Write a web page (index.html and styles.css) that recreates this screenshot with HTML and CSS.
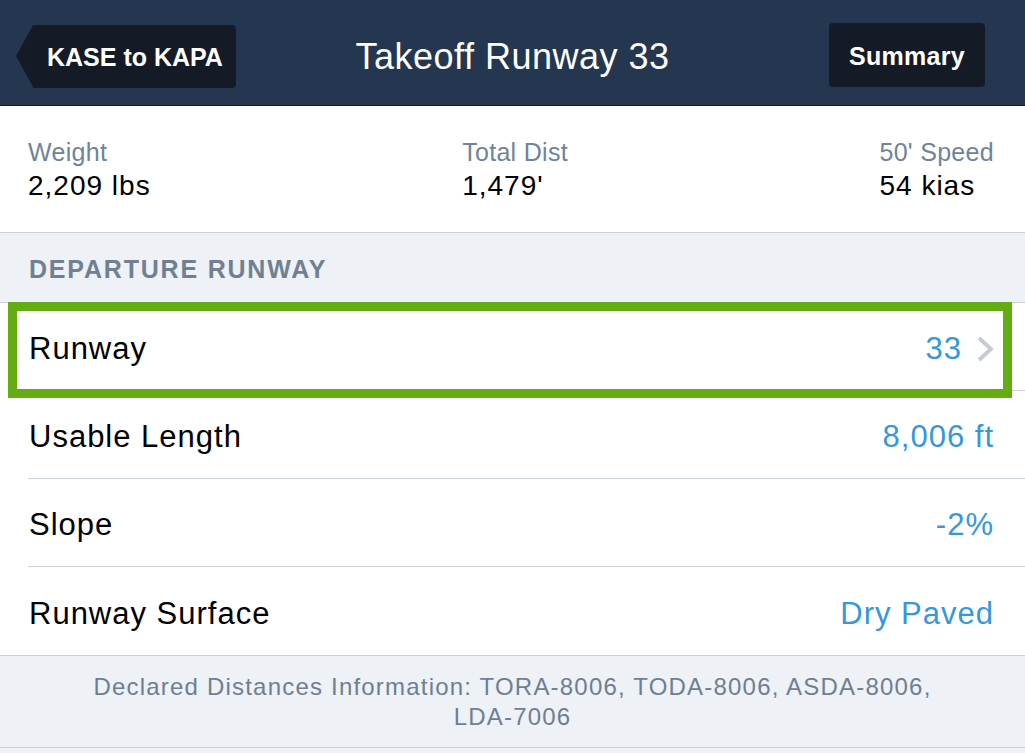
FILE: index.html
```html
<!DOCTYPE html>
<html lang="en">
<head>
<meta charset="utf-8">
<title>Takeoff Runway 33</title>
<link rel="stylesheet" href="styles.css">
</head>
<body>
  <header class="navbar">
    <div class="nav-left">
      <button class="back-btn"><span class="back-label">KASE to KAPA</span></button>
    </div>
    <h1 class="nav-title">Takeoff Runway 33</h1>
    <div class="nav-right">
      <button class="summary-btn">Summary</button>
    </div>
  </header>

  <section class="stats">
    <div class="stat">
      <div class="stat-label">Weight</div>
      <div class="stat-value">2,209 lbs</div>
    </div>
    <div class="stat">
      <div class="stat-label">Total Dist</div>
      <div class="stat-value">1,479'</div>
    </div>
    <div class="stat">
      <div class="stat-label">50' Speed</div>
      <div class="stat-value">54 kias</div>
    </div>
  </section>

  <div class="section-header">DEPARTURE RUNWAY</div>

  <div class="rows">
    <div class="row">
      <span class="row-label">Runway</span>
      <span class="row-value">33
        <svg class="chevron" width="18" height="28" viewBox="0 0 18 28" aria-hidden="true">
          <polyline points="3,3 15,14 3,25" fill="none" stroke="#c5cbd3" stroke-width="3.8" stroke-linecap="butt" stroke-linejoin="miter"/>
        </svg>
      </span>
    </div>
    <div class="row">
      <span class="row-label">Usable Length</span>
      <span class="row-value">8,006 ft</span>
    </div>
    <div class="row">
      <span class="row-label">Slope</span>
      <span class="row-value">-2%</span>
    </div>
    <div class="row row-last">
      <span class="row-label">Runway Surface</span>
      <span class="row-value">Dry Paved</span>
    </div>
    <div class="highlight"></div>
  </div>

  <footer class="footnote">Declared Distances Information: TORA-8006, TODA-8006, ASDA-8006, <span class="nowrap">LDA-7006</span></footer>
</body>
</html>
```

FILE: styles.css
```css
* {
  box-sizing: border-box;
}

html, body {
  margin: 0;
  padding: 0;
}

body {
  background: #eef1f5;
  font-family: "Liberation Sans", Arial, Helvetica, sans-serif;
  color: #000;
  width: 1025px;
  overflow: hidden;
}

/* ---------- Nav bar ---------- */
.navbar {
  height: 106px;
  background: #253650;
  border-bottom: 1px solid #121a26;
  display: grid;
  grid-template-columns: 1fr auto 1fr;
  align-items: center;
  padding: 0 40px;
}

.nav-left {
  justify-self: start;
  display: flex;
  align-items: center;
  padding-top: 7px;
  margin-left: -7px;
}

.nav-right {
  justify-self: end;
  display: flex;
  align-items: center;
  padding-top: 4px;
}

.back-btn {
  position: relative;
  height: 63px;
  padding: 0 13px 0 14px;
  background: #141b27;
  border: none;
  border-radius: 0 4px 4px 0;
  color: #fff;
  font-family: "Liberation Sans", Arial, sans-serif;
  font-weight: 700;
  font-size: 25px;
  letter-spacing: 0;
  display: flex;
  align-items: center;
}

.back-label {
  padding-top: 3px;
}

.back-btn::before {
  content: "";
  position: absolute;
  left: -17px;
  top: 0;
  width: 0;
  height: 0;
  border-top: 31.5px solid transparent;
  border-bottom: 31.5px solid transparent;
  border-right: 17px solid #141b27;
}

.summary-btn {
  height: 64px;
  width: 156px;
  background: #141b27;
  border: none;
  border-radius: 4px;
  color: #fff;
  font-family: "Liberation Sans", Arial, sans-serif;
  font-weight: 700;
  font-size: 25px;
  letter-spacing: 0.3px;
  padding: 3px 0 0;
}

.nav-title {
  margin: 0;
  color: #fff;
  font-weight: 400;
  font-size: 36px;
  letter-spacing: 0.5px;
  padding-top: 9px;
}

/* ---------- Stats ---------- */
.stats {
  background: #fff;
  display: flex;
  justify-content: space-between;
  padding: 31px 31px 29px 28px;
  border-bottom: 1px solid #c8d0da;
}

.stat-label {
  font-size: 25px;
  line-height: 30px;
  color: #70839a;
  letter-spacing: 0.3px;
}

.stat-value {
  margin-top: 2px;
  font-size: 28px;
  line-height: 34px;
  color: #000;
  letter-spacing: 1px;
}

/* ---------- Section header ---------- */
.section-header {
  height: 70px;
  padding: 21px 28px 0 29px;
  font-size: 25px;
  line-height: 30px;
  font-weight: 700;
  letter-spacing: 1.8px;
  color: #717f92;
  border-bottom: 1px solid #c8d0da;
}

/* ---------- Rows ---------- */
.rows {
  position: relative;
  background: #fff;
}

.row {
  margin-left: 28px;
  height: 88px;
  padding: 5px 31px 0 1px;
  display: flex;
  align-items: center;
  justify-content: space-between;
  border-bottom: 1px solid #c8d0da;
  font-size: 31px;
  letter-spacing: 1px;
}

.row-last {
  border-bottom: none;
}

.row-label {
  color: #000;
}

.row-value {
  color: #3498db;
  display: flex;
  align-items: center;
}

.chevron {
  margin-left: 14px;
  margin-right: 0;
}

.highlight {
  position: absolute;
  left: 8px;
  top: -1px;
  width: 1004px;
  height: 96px;
  border: 9px solid #63ad12;
  pointer-events: none;
}

/* ---------- Footnote ---------- */
.footnote {
  background: #eef1f5;
  border-top: 1px solid #c8d0da;
  border-bottom: 1px solid #c8d0da;
  padding: 16px 70px 15px;
  text-align: center;
  font-size: 24px;
  line-height: 30px;
  color: #6f7f92;
  letter-spacing: 1.2px;
}

.nowrap {
  white-space: nowrap;
}
```
